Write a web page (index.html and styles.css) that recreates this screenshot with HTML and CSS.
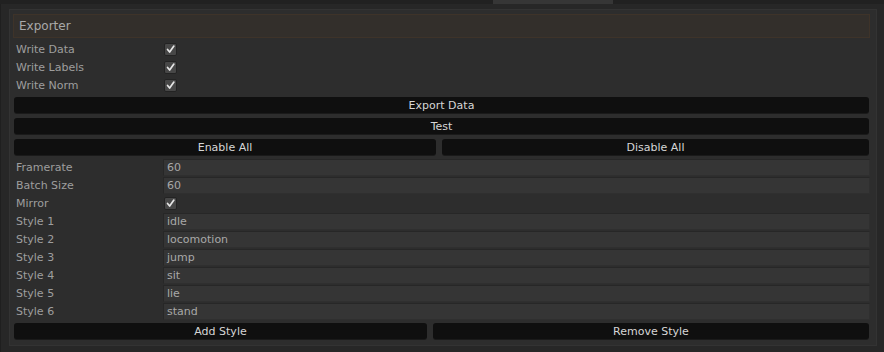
FILE: index.html
```html
<!DOCTYPE html>
<html lang="en">
<head>
    <meta charset="UTF-8">
    <title>Exporter</title>
    <link rel="stylesheet" href="styles.css">
</head>
<body>
    <div class="tabs">
        <div class="tab-gap"></div>
        <div class="tab active"></div>
    </div>
    <div class="window">
        <div class="panel">
            <div class="header">Exporter</div>

            <div class="row"><span class="label">Write Data</span><span class="check"><svg viewBox="0 0 13 13"><path d="M3 6.5 L5.5 9.5 L10.5 2.5"/></svg></span></div>
            <div class="row"><span class="label">Write Labels</span><span class="check"><svg viewBox="0 0 13 13"><path d="M3 6.5 L5.5 9.5 L10.5 2.5"/></svg></span></div>
            <div class="row"><span class="label">Write Norm</span><span class="check"><svg viewBox="0 0 13 13"><path d="M3 6.5 L5.5 9.5 L10.5 2.5"/></svg></span></div>

            <button class="btn btn-export">Export Data</button>
            <button class="btn btn-test">Test</button>
            <div class="btn-row">
                <button class="btn btn-enable">Enable All</button>
                <button class="btn btn-fill">Disable All</button>
            </div>

            <div class="fields">
                <div class="row"><span class="label">Framerate</span><span class="field">60</span></div>
                <div class="row"><span class="label">Batch Size</span><span class="field">60</span></div>
                <div class="row"><span class="label">Mirror</span><span class="check"><svg viewBox="0 0 13 13"><path d="M3 6.5 L5.5 9.5 L10.5 2.5"/></svg></span></div>
                <div class="row"><span class="label">Style 1</span><span class="field">idle</span></div>
                <div class="row"><span class="label">Style 2</span><span class="field">locomotion</span></div>
                <div class="row"><span class="label">Style 3</span><span class="field">jump</span></div>
                <div class="row"><span class="label">Style 4</span><span class="field">sit</span></div>
                <div class="row"><span class="label">Style 5</span><span class="field">lie</span></div>
                <div class="row"><span class="label">Style 6</span><span class="field">stand</span></div>
            </div>

            <div class="btn-row btn-row-bottom">
                <button class="btn btn-add">Add Style</button>
                <button class="btn btn-fill">Remove Style</button>
            </div>
        </div>
    </div>
</body>
</html>
```

FILE: styles.css
```css
* {
    box-sizing: border-box;
}

body {
    margin: 0;
    background-color: #252525;
    font-family: 'DejaVu Sans', Verdana, sans-serif;
    font-size: 11px;
    color: #a4a4a4;
}

.tabs {
    display: flex;
    height: 4px;
    background-color: #212121;
}

.tab-gap {
    width: 493px;
}

.tab {
    width: 120px;
    background-color: #363636;
}

.window {
    height: 348px;
    padding: 5px 7px 6px 8px;
    background-color: #272727;
    border-left: 1px solid #1f1f1f;
}

.panel {
    height: 100%;
    padding: 4px 6px 5px 3px;
    background-color: #2d2d2d;
    border: 1px solid #333;
}

.header {
    height: 24px;
    padding-left: 5px;
    line-height: 22px;
    font-size: 12px;
    color: #a9a9a9;
    background-color: #332f2b;
    border: 1px solid #3e3329;
}

.row {
    display: flex;
    align-items: center;
    height: 18px;
}

.header + .row {
    margin-top: 2px;
}

.label {
    flex: 0 0 150px;
    padding-left: 3px;
    padding-top: 1px;
    color: #9e9e9e;
}

.check {
    display: flex;
    width: 13px;
    height: 13px;
    margin-left: 1px;
    background-color: #474747;
    border: 1px solid #232323;
    border-radius: 2px;
}

.check svg {
    width: 100%;
    height: 100%;
    fill: none;
    stroke: #e6e6e6;
    stroke-width: 2;
    stroke-linecap: round;
    stroke-linejoin: round;
}

.field {
    flex: 1;
    height: 17px;
    margin-top: 1px;
    padding-left: 3px;
    line-height: 16px;
    color: #a8a8a8;
    background-color: #353535;
    border: 1px solid #272727;
    border-bottom-color: #2f2f2f;
    border-right-color: #2f2f2f;
}

.btn {
    display: block;
    width: calc(100% - 2px);
    height: 16px;
    margin: 0 1px;
    padding: 1px 0 0;
    font-family: inherit;
    font-size: 11px;
    color: #d6d6d6;
    background-color: #0f0f0f;
    border: none;
    border-radius: 3px;
    box-shadow: 0 1px 0 #1a1a1a;
}

.btn-export {
    margin-top: 3px;
}

.btn-test {
    margin-top: 5px;
}

.btn-row {
    display: flex;
    gap: 6px;
    margin-top: 5px;
    padding: 0 1px;
}

.btn-row .btn {
    width: auto;
    margin: 0;
}

.btn-enable {
    flex: 0 0 422px;
}

.btn-add {
    flex: 0 0 413px;
}

.btn-fill {
    flex: 1;
}

.fields {
    margin-top: 3px;
}

.btn-row-bottom {
    margin-top: 3px;
}
```
